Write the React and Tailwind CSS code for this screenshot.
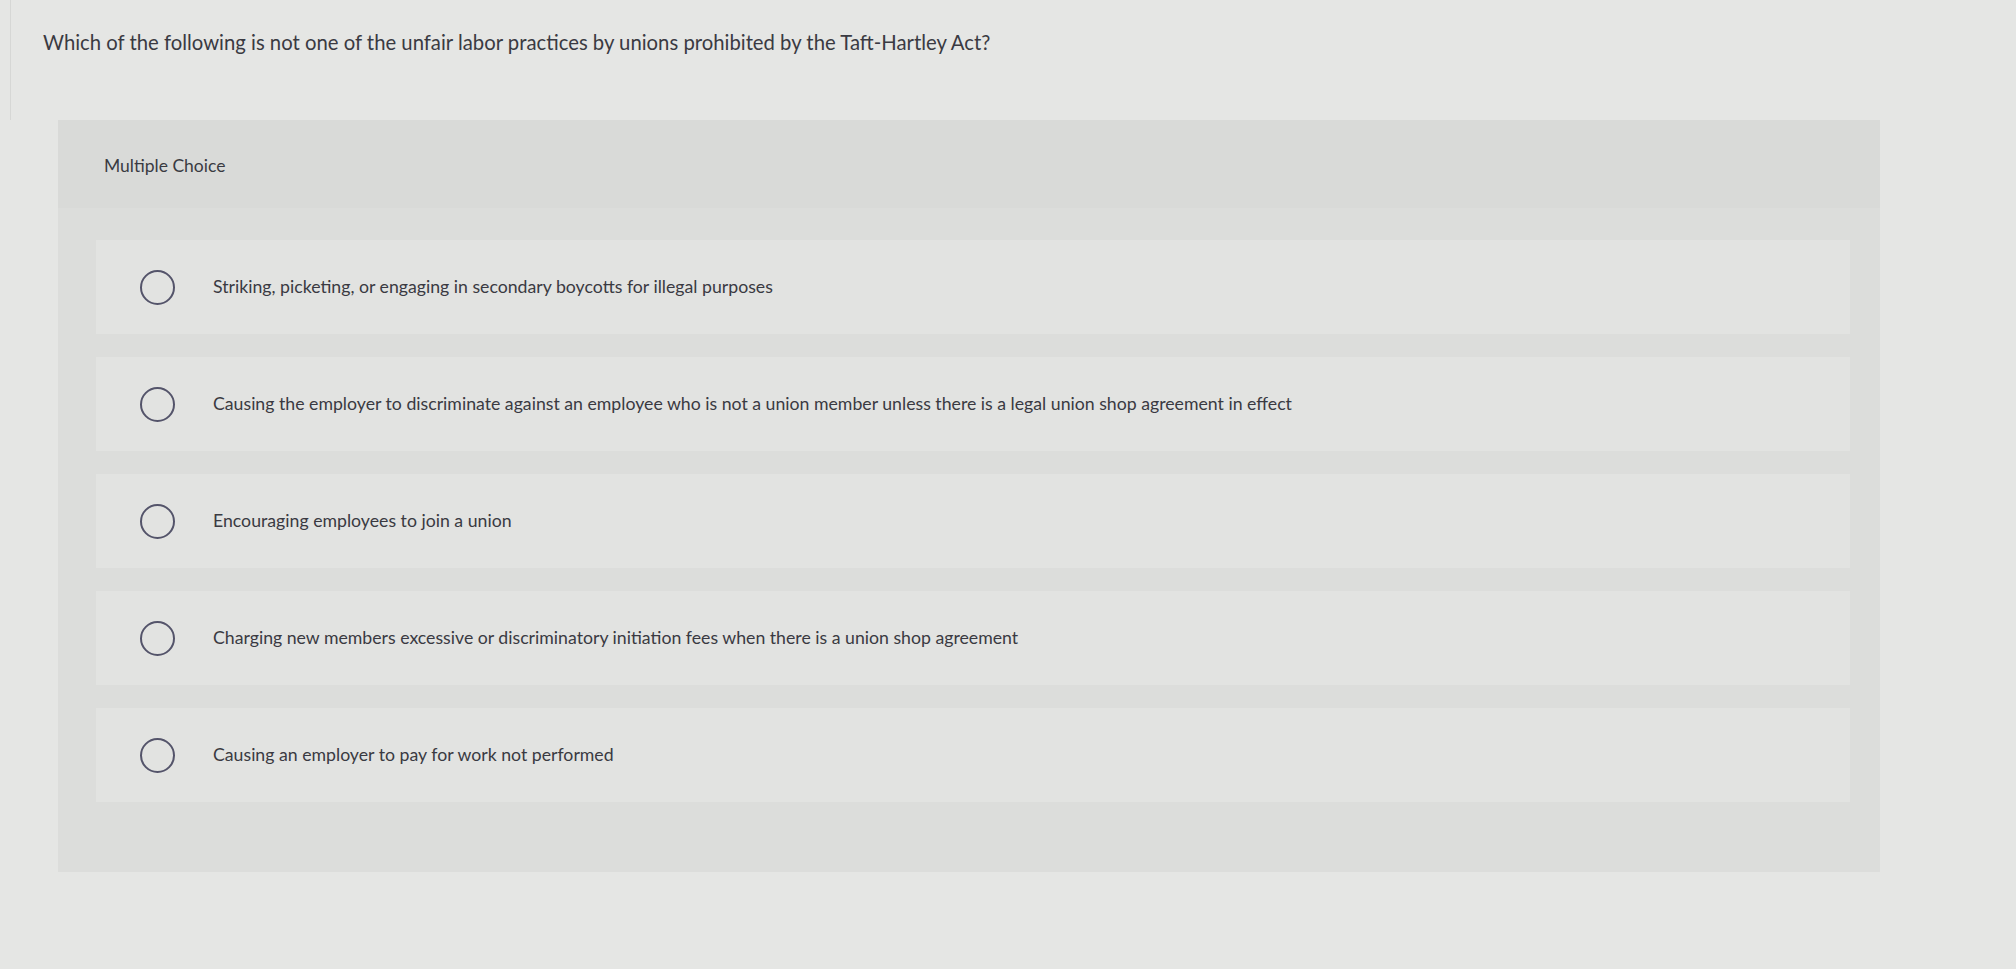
const options = [
  'Striking, picketing, or engaging in secondary boycotts for illegal purposes',
  'Causing the employer to discriminate against an employee who is not a union member unless there is a legal union shop agreement in effect',
  'Encouraging employees to join a union',
  'Charging new members excessive or discriminatory initiation fees when there is a union shop agreement',
  'Causing an employer to pay for work not performed',
];

const Radio = () => (
  <span className="block w-[35px] h-[35px] shrink-0 rounded-full border-2 border-[#54546a]" />
);

const App = () => {
  return (
    <div className="min-h-[969px] w-full bg-[#e5e6e4] font-['Lato',sans-serif] text-[#3a3a42] overflow-hidden">
      {/* Question */}
      <div className="pl-[32px] pt-[27px] h-[120px] border-l border-[#d6d7d5] ml-[10px]">
        <p className="text-[20.3px] leading-[30px]">
          Which of the following is not one of the unfair labor practices by unions prohibited by the Taft-Hartley Act?
        </p>
      </div>

      {/* Answer panel */}
      <div className="mx-[58px] w-[1822px] h-[752px] bg-[#dcdddb] flex flex-col">
        <div className="h-[88px] shrink-0 bg-[#d9dad8] flex items-center pl-[46px] pt-[4px]">
          <span className="text-[17.5px]">Multiple Choice</span>
        </div>

        <div className="flex flex-col gap-[23px] pt-[32px] pl-[38px] pr-[30px]">
          {options.map((text) => (
            <div key={text} className="h-[94px] bg-[#e2e3e1] flex items-center pl-[44px]">
              <Radio />
              <span className="ml-[38px] text-[17.7px] leading-[24px]">{text}</span>
            </div>
          ))}
        </div>
      </div>
    </div>
  );
};

export default App;
